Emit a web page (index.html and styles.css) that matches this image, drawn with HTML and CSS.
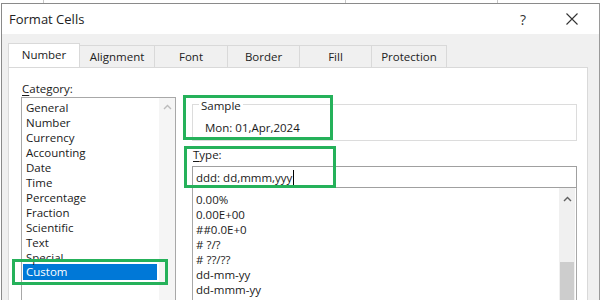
FILE: index.html
```html
<!DOCTYPE html>
<html lang="en">
<head>
    <meta charset="UTF-8">
    <title>Format Cells</title>
    <link rel="stylesheet" href="styles.css">
</head>
<body>
    <div class="backdrop">
        <span class="grid-line"></span>
        <span class="grid-line"></span>
        <span class="grid-line"></span>
    </div>
    <div class="dialog">
        <div class="title-bar">
            <span class="title">Format Cells</span>
            <span class="help">?</span>
            <svg class="close" width="12" height="12" viewBox="0 0 12 12">
                <path d="M0.5 0.5 L11.5 11.5 M11.5 0.5 L0.5 11.5" stroke="#333" stroke-width="1.1" fill="none"/>
            </svg>
        </div>
        <div class="dialog-body">
            <div class="tabs">
                <div class="tab active">Number</div>
                <div class="tab">Alignment</div>
                <div class="tab">Font</div>
                <div class="tab">Border</div>
                <div class="tab">Fill</div>
                <div class="tab">Protection</div>
            </div>
            <div class="panel">
                <div class="left-col">
                    <div class="label"><u>C</u>ategory:</div>
                    <div class="list category-list">
                        <ul class="items">
                            <li>General</li>
                            <li>Number</li>
                            <li>Currency</li>
                            <li>Accounting</li>
                            <li>Date</li>
                            <li>Time</li>
                            <li>Percentage</li>
                            <li>Fraction</li>
                            <li>Scientific</li>
                            <li>Text</li>
                            <li>Special</li>
                            <li class="selected">Custom</li>
                        </ul>
                        <div class="scrollbar disabled">
                            <svg class="arrow" width="9" height="6" viewBox="0 0 9 6">
                                <path d="M1 5 L4.5 1.5 L8 5" stroke="#bcbcbc" stroke-width="1.4" fill="none"/>
                            </svg>
                        </div>
                    </div>
                    <div class="highlight hl-custom"></div>
                </div>
                <div class="right-col">
                    <fieldset class="sample">
                        <legend>Sample</legend>
                        <div class="sample-text">Mon: 01,Apr,2024</div>
                    </fieldset>
                    <div class="label type-label"><u>T</u>ype:</div>
                    <div class="type-input">ddd: dd,mmm,yyy<span class="caret"></span></div>
                    <div class="list type-list">
                        <ul class="items">
                            <li>0.00%</li>
                            <li>0.00E+00</li>
                            <li>##0.0E+0</li>
                            <li># ?/?</li>
                            <li># ??/??</li>
                            <li>dd-mm-yy</li>
                            <li>dd-mmm-yy</li>
                            <li>dd-mmm</li>
                        </ul>
                        <div class="scrollbar">
                            <svg class="arrow" width="9" height="6" viewBox="0 0 9 6">
                                <path d="M1 5 L4.5 1.5 L8 5" stroke="#606060" stroke-width="1.4" fill="none"/>
                            </svg>
                            <div class="thumb"></div>
                        </div>
                    </div>
                    <div class="highlight hl-sample"></div>
                    <div class="highlight hl-type"></div>
                </div>
            </div>
        </div>
    </div>
</body>
</html>
```

FILE: styles.css
```css
* {
    margin: 0;
    padding: 0;
    box-sizing: border-box;
}

body {
    width: 600px;
    height: 300px;
    overflow: hidden;
    background: #fff;
    font-family: 'Open Sans', 'Noto Sans', sans-serif;
    font-size: 11.5px;
    color: #1a1a1a;
}

.backdrop {
    height: 3px;
    position: relative;
    background: #fff;
}

.grid-line {
    position: absolute;
    top: 0;
    width: 1px;
    height: 3px;
    background: #c8c8c8;
}

.grid-line:nth-child(1) { left: 43px; }
.grid-line:nth-child(2) { left: 345px; }
.grid-line:nth-child(3) { left: 497px; }

.dialog {
    height: 297px;
    margin-left: 1px;
    border-top: 1px solid #8a8a8a;
    border-left: 1px solid #8a8a8a;
    border-right: 1px solid #9a9a9a;
    display: flex;
    flex-direction: column;
    overflow: hidden;
}

.title-bar {
    flex-shrink: 0;
    height: 30px;
    background: #fff;
    display: flex;
    align-items: center;
    padding-left: 7px;
}

.title {
    font-size: 13px;
    flex: 1;
    color: #222;
}

.help {
    font-size: 14px;
    color: #333;
    margin-right: 40px;
}

.close {
    margin-right: 21px;
}

.dialog-body {
    flex: 1;
    min-height: 0;
    background: #f0f0f0;
    padding: 9px 10px 0 6px;
    display: flex;
    flex-direction: column;
}

.tabs {
    flex-shrink: 0;
    display: flex;
    align-items: flex-end;
    height: 24px;
}

.tab {
    height: 22px;
    display: flex;
    align-items: center;
    justify-content: center;
    border: 1px solid #d9d9d9;
    border-bottom: none;
    border-left: none;
    color: #222;
}

.tab:nth-child(1) { width: 72px; }
.tab:nth-child(2) { width: 75px; }
.tab:nth-child(3) { width: 73px; }
.tab:nth-child(4) { width: 72px; }
.tab:nth-child(5) { width: 72px; }
.tab:nth-child(6) { width: 75px; }

.tab.active {
    height: 24px;
    background: #fff;
    border-left: 1px solid #d9d9d9;
    padding-bottom: 2px;
}

.panel {
    flex: 1;
    min-height: 0;
    width: 580px;
    background: #fff;
    border: 1px solid #d9d9d9;
    border-bottom: none;
    display: flex;
    padding: 12px 0 0 12px;
    gap: 16px;
}

.left-col {
    width: 155px;
    position: relative;
}

.right-col {
    width: 385px;
    position: relative;
    padding-top: 15px;
}

.label {
    height: 17px;
    line-height: 17px;
    padding-left: 1px;
}

.label u {
    text-decoration-thickness: 1px;
    text-underline-offset: 2px;
}

.list {
    border: 1px solid #a8a8a8;
    display: flex;
    height: 220px;
}

.items {
    list-style: none;
    flex: 1;
    padding: 2px 1px 0 1px;
}

.items li {
    height: 15px;
    line-height: 15px;
    padding-left: 3px;
    white-space: nowrap;
}

.items li.selected {
    background: #0078d7;
    color: #fff;
    height: 16px;
    line-height: 16px;
    margin-top: -1px;
    margin-right: 1px;
}

.scrollbar {
    width: 16px;
    background: #f0f0f0;
    display: flex;
    flex-direction: column;
    align-items: center;
    padding-top: 6px;
}

.scrollbar.disabled {
    background: #f5f5f5;
}

.thumb {
    width: 14px;
    height: 60px;
    margin-top: 60px;
    background: #cdcdcd;
}

.sample {
    border: 1px solid #dcdcdc;
    padding: 0 0 5px 12px;
}

.sample legend {
    padding: 4px 2px 0 2px;
    margin-left: -6px;
    line-height: 14px;
}

.sample-text {
    line-height: 15px;
    padding-top: 7px;
}

.type-label {
    margin-top: 5px;
    height: 18px;
    line-height: 18px;
}

.type-input {
    margin-top: 2px;
    height: 22px;
    border: 1px solid #a0a0a0;
    padding-left: 3px;
    display: flex;
    align-items: center;
}

.caret {
    width: 1px;
    height: 15px;
    background: #000;
    margin-left: 1px;
}

.type-list {
    border-top: none;
    padding-right: 1px;
}

.type-list .items {
    padding-top: 4px;
}

.type-list .items li {
    padding-left: 2px;
}

.type-list .scrollbar {
    padding-top: 8px;
}

.highlight {
    position: absolute;
    border: 3px solid #25b15a;
}

.hl-custom {
    left: -9px;
    top: 179px;
    width: 156px;
    height: 26px;
}

.hl-sample {
    left: -9px;
    top: 15px;
    width: 150px;
    height: 45px;
}

.hl-type {
    left: -8px;
    top: 66px;
    width: 152px;
    height: 42px;
}
```
